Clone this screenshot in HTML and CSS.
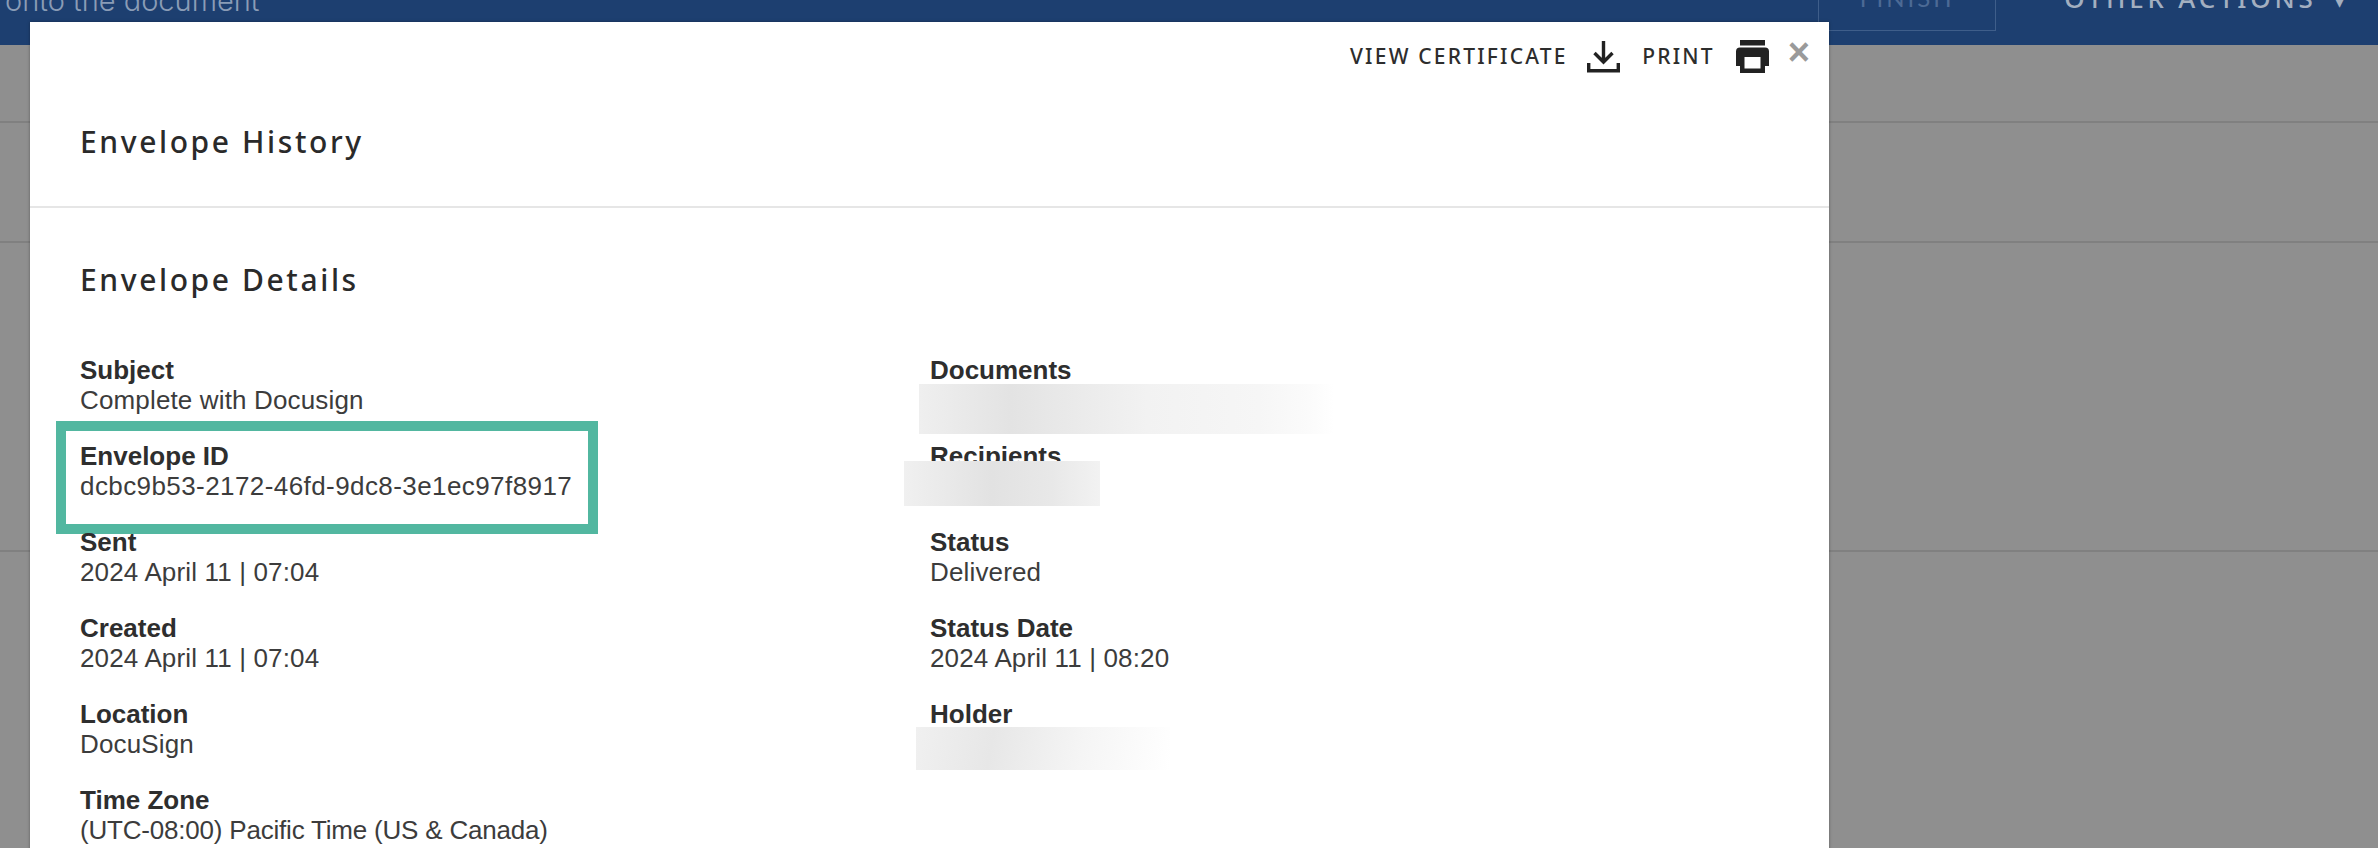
FILE: index.html
```html
<!DOCTYPE html>
<html lang="en">
<head>
<meta charset="utf-8">
<title>Envelope History</title>
<link rel="stylesheet" href="styles.css">
</head>
<body>
<div class="page">
  <header class="topbar">
    <span class="topbar-msg">onto the document</span>
    <span class="finish">FINISH</span>
    <span class="other">OTHER ACTIONS <span class="caret">▾</span></span>
  </header>
  <div class="band band-a"></div>
  <div class="band band-b"></div>
  <div class="band band-c"></div>
</div>

<section class="modal">
  <div class="toolbar">
    <span class="tool-label">VIEW CERTIFICATE</span>
    <svg class="icon icon-dl" viewBox="0 0 33 33" aria-hidden="true">
      <path d="M16.5 1V21M7.5 13L16.5 22L25.5 13" fill="none" stroke="#222" stroke-width="3.4"/>
      <path d="M1.7 23V30.8H31.3V23" fill="none" stroke="#222" stroke-width="3.4"/>
    </svg>
    <span class="tool-label tool-print">PRINT</span>
    <svg class="icon icon-print" viewBox="0 0 33 33" aria-hidden="true">
      <rect x="4" y="0" width="25" height="5.5" fill="#222"/>
      <path fill="#222" fill-rule="evenodd" d="M4 7.5H29A4 4 0 0 1 33 11.500V26H29V33H4V26H0V11.500A4 4 0 0 1 4 7.500ZM8.500 17V28.500H24.500V17Z"/>
    </svg>
    <span class="close">×</span>
  </div>
  <h1 class="modal-title">Envelope History</h1>
  <div class="divider"></div>
  <h2 class="section-title">Envelope Details</h2>
  <div class="details">
    <div class="col">
      <div class="field"><div class="label">Subject</div><div class="value">Complete with Docusign</div></div>
      <div class="field"><div class="label">Envelope ID</div><div class="value value-id">dcbc9b53-2172-46fd-9dc8-3e1ec97f8917</div><div class="highlight"></div></div>
      <div class="field"><div class="label">Sent</div><div class="value">2024 April 11 | 07:04</div></div>
      <div class="field"><div class="label">Created</div><div class="value">2024 April 11 | 07:04</div></div>
      <div class="field"><div class="label">Location</div><div class="value">DocuSign</div></div>
      <div class="field"><div class="label">Time Zone</div><div class="value value-tz">(UTC-08:00) Pacific Time (US &amp; Canada)</div></div>
    </div>
    <div class="col">
      <div class="field"><div class="label">Documents</div><div class="redact redact-doc"></div></div>
      <div class="field"><div class="label">Recipients</div><div class="redact redact-rec"></div></div>
      <div class="field"><div class="label">Status</div><div class="value">Delivered</div></div>
      <div class="field"><div class="label">Status Date</div><div class="value">2024 April 11 | 08:20</div></div>
      <div class="field"><div class="label">Holder</div><div class="redact redact-hold"></div></div>
    </div>
  </div>
</section>
</body>
</html>
```
FILE: styles.css
```css
* { box-sizing: border-box; }
html, body { margin: 0; height: 100%; overflow: hidden; }
body { background: #8f8f8f; font-family: "Liberation Sans", Arial, sans-serif; position: relative; }

.page { height: 848px; overflow: hidden; }
.topbar {
  height: 45px;
  background: #1d3f70;
  display: flex;
  align-items: flex-end;
  overflow: hidden;
  padding: 0 30px 24px 0;
}
.topbar-msg { font-family: "Inter", sans-serif; font-size: 29px; font-weight: 300; color: #8a9cb6; line-height: 40px; margin-right: auto; margin-left: 5px; }
.finish {
  width: 178px; height: 60px; border: 1px solid #3f5e8a;
  color: #4c6a95; font-family: "Lato", sans-serif; font-size: 24px; letter-spacing: 3px;
  display: flex; align-items: flex-start; justify-content: center; padding-top: 11px;
  flex: none; margin-bottom: -10px;
  margin-right: 68px;
}
.other { font-family: "Noto Sans", sans-serif; font-size: 26px; letter-spacing: 3.8px; color: #a3afc0; line-height: 40px; flex: none; font-weight: 500; }
.caret { font-size: 18px; margin-left: 8px; }
.band { border-bottom: 2px solid #808080; }
.band-a { height: 78px; }
.band-b { height: 120px; }
.band-c { height: 309px; }

.modal {
  position: absolute;
  left: 30px; top: 22px;
  width: 1799px; height: 900px;
  background: #fff;
  box-shadow: 0 0 3px rgba(0, 0, 0, .35);
  color: #2a2a2a;
}
.toolbar { display: flex; align-items: flex-start; height: 50px; padding-top: 18px; padding-left: 1320px; }
.tool-label { font-family: "Noto Sans", sans-serif; font-weight: 500; font-size: 21px; letter-spacing: 2.2px; line-height: 32px; color: #2d2d2d; white-space: nowrap; }
.icon { width: 33px; height: 33px; flex: none; }
.icon-dl { margin-left: 19px; }
.tool-print { margin-left: 22.5px; }
.icon-print { margin-left: 21px; }
.close { font-family: "Liberation Sans", sans-serif; font-size: 38px; font-weight: 700; line-height: 24px; color: #9a9a9a; margin-left: 19px; }

.modal-title, .section-title {
  margin: 0; font-family: "Noto Sans", sans-serif; font-weight: 500; font-size: 30px; letter-spacing: 2.6px; line-height: 40px; color: #2a2a2a; padding-left: 50px;
}
.modal-title { padding-top: 50px; height: 134px; }
.divider { height: 2px; background: #e6e6e6; }
.section-title { padding-top: 52px; height: 147px; }

.details { display: grid; grid-template-columns: 850px 1fr; padding-left: 50px; }
.field { height: 86px; position: relative; }
.label { font-size: 26px; font-weight: 700; line-height: 30px; color: #2e2e2e; }
.value { font-size: 26px; line-height: 30px; color: #3c3c3c; white-space: nowrap; letter-spacing: .15px; }
.value-id { letter-spacing: .42px; }
.value-tz { letter-spacing: -.2px; }

.highlight { position: absolute; left: -24px; top: -20px; width: 542px; height: 113px; border: 10px solid #52b7a0; }
.redact { position: absolute; }
.redact-doc { left: -11px; top: 29px; width: 415px; height: 50px; background: linear-gradient(90deg, #efefef 0%, #e3e3e3 22%, #f2f2f2 55%, #f6f6f6 82%, #fbfbfb 94%, #fff 100%); }
.redact-rec { left: -26px; top: 20px; width: 196px; height: 45px; background: linear-gradient(90deg, #f0f0f0 0%, #e2e2e2 45%, #e8e8e8 75%, #f2f2f2 100%); }
.redact-hold { left: -14px; top: 28px; width: 254px; height: 43px; background: linear-gradient(100deg, #f0f0f0 0%, #e7e7e7 30%, #f5f5f5 65%, #fff 100%); }
```
